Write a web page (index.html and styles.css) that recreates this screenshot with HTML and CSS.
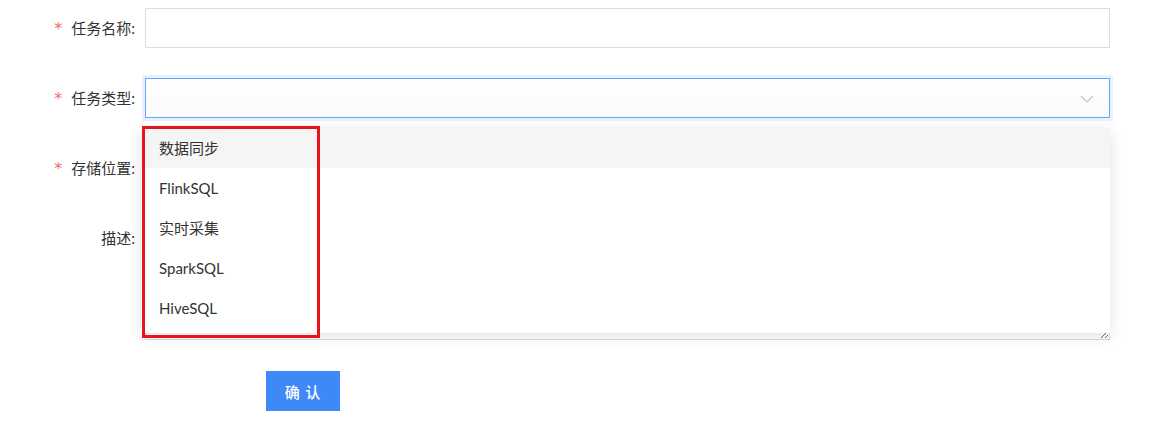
FILE: index.html
```html
<!DOCTYPE html>
<html lang="zh">
<head>
<meta charset="utf-8">
<link rel="stylesheet" href="styles.css">
</head>
<body>
<form class="form">
  <div class="row">
    <label class="label"><span class="req">*</span>任务名称:</label>
    <div class="field"><input class="input" type="text"></div>
  </div>
  <div class="row">
    <label class="label"><span class="req">*</span>任务类型:</label>
    <div class="field select-wrap">
      <div class="input select">
        <svg class="chev" width="14" height="8" viewBox="0 0 14 8"><path d="M1 1 L7 7 L13 1" fill="none" stroke="#c0c4cc" stroke-width="1.2"/></svg>
      </div>
      <ul class="dropdown">
        <li class="opt hover">数据同步</li>
        <li class="opt">FlinkSQL</li>
        <li class="opt">实时采集</li>
        <li class="opt">SparkSQL</li>
        <li class="opt">HiveSQL</li>
      </ul>
      <div class="mark"></div>
    </div>
  </div>
  <div class="row">
    <label class="label"><span class="req">*</span>存储位置:</label>
    <div class="field"><input class="input" type="text"></div>
  </div>
  <div class="row row-text">
    <label class="label">描述:</label>
    <div class="field"><textarea class="textarea"></textarea></div>
  </div>
  <div class="row row-btn">
    <span></span>
    <div class="actions"><button type="button" class="btn">确 认</button></div>
  </div>
</form>
</body>
</html>
```
FILE: styles.css
```css
html, body {
  margin: 0;
  padding: 0;
  background: #fff;
}
body {
  font-family: Lato, "Noto Sans CJK SC", sans-serif;
  font-size: 15px;
  color: #333;
}
.form {
  width: 1110px;
  padding-top: 8px;
  display: flex;
  flex-direction: column;
  gap: 30px;
}
.row {
  display: grid;
  grid-template-columns: 137px 1fr;
  column-gap: 8px;
}
.label {
  text-align: right;
  line-height: 40px;
  height: 40px;
  color: #333;
  white-space: nowrap;
  padding-right: 2px;
}
.req {
  color: #f56c6c;
  margin-right: 9px;
  font-family: "DejaVu Sans", sans-serif;
  font-size: 16px;
}
.field {
  position: relative;
}
.input {
  display: block;
  box-sizing: border-box;
  width: 100%;
  height: 40px;
  border: 1px solid #dcdcdc;
  border-radius: 0;
  background: #fff;
  margin: 0;
  padding: 0 10px;
  outline: none;
}
.select {
  border-color: #6ea4f7;
  box-shadow: 0 0 0 3px rgba(64, 140, 255, 0.12);
  background: linear-gradient(#fff, #fafafa);
  position: relative;
}
.chev {
  position: absolute;
  right: 15px;
  top: 16px;
}
.dropdown {
  position: absolute;
  left: -4px;
  right: 0;
  top: 50px;
  margin: 0;
  padding: 0 0 5px;
  list-style: none;
  background: #fff;
  box-shadow: 0 3px 14px rgba(0, 0, 0, 0.12);
  z-index: 5;
}
.opt {
  height: 40px;
  line-height: 40px;
  padding-left: 18px;
  color: #333;
}
.opt.hover {
  background: #f5f5f5;
}
.mark {
  position: absolute;
  left: -3px;
  top: 48px;
  width: 172px;
  height: 206px;
  border: 3px solid #e8141c;
  z-index: 6;
}
.textarea {
  display: block;
  box-sizing: border-box;
  width: 100%;
  height: 122px;
  border: 1px solid #dcdcdc;
  margin: 0;
  padding: 8px 10px;
  resize: vertical;
  font-family: inherit;
  font-size: 14px;
  outline: none;
}
.row-btn {
  margin-top: 1px;
}
.actions {
  padding-left: 121px;
}
.btn {
  width: 74px;
  height: 40px;
  border: none;
  border-radius: 0;
  background: #3f88f8;
  color: #fff;
  font-family: "Noto Sans CJK SC", sans-serif;
  font-size: 15px;
  font-weight: 500;
  letter-spacing: 1px;
  padding: 0;
}
```
